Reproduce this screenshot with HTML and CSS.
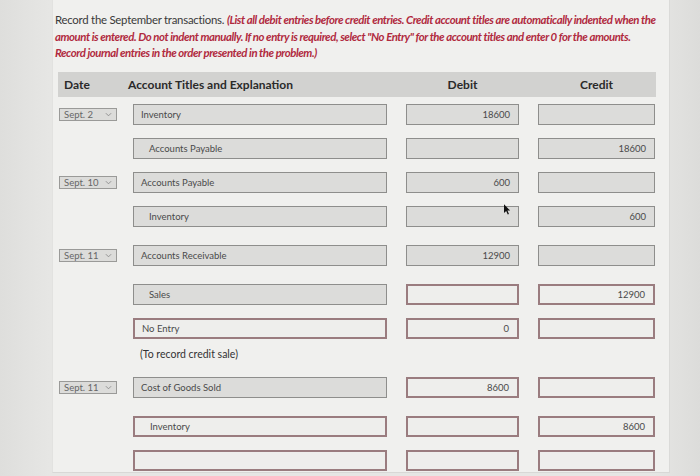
FILE: index.html
```html
<!DOCTYPE html>
<html lang="en">
<head>
  <meta charset="UTF-8" />
  <title>Journal Entries</title>
  <link rel="stylesheet" href="styles.css">
</head>
<body>

  <div class="screen">

    <!-- Instructions -->
    <p class="intro">
      Record the September transactions. <em>(List all debit entries before credit entries. Credit account titles are automatically indented when the<br>amount is entered. Do not indent manually. If no entry is required, select "No Entry" for the account titles and enter 0 for the amounts.<br>Record journal entries in the order presented in the problem.)</em>
    </p>

    <!-- Journal table -->
    <div class="journal">
      <div class="head">
        <div class="date">Date</div>
        <div class="acct">Account Titles and Explanation</div>
        <div class="amt">Debit</div>
        <div class="amt">Credit</div>
      </div>

      <div class="row">
        <div class="date"><div class="select">Sept. 2<svg viewBox="0 0 8 5"><path d="M1 1l3 3 3-3"/></svg></div></div>
        <div class="acct field">Inventory</div>
        <div class="amt field">18600</div>
        <div class="amt field"></div>
      </div>
      <div class="row">
        <div class="date"></div>
        <div class="acct field indent">Accounts Payable</div>
        <div class="amt field"></div>
        <div class="amt field">18600</div>
      </div>

      <div class="row">
        <div class="date"><div class="select">Sept. 10<svg viewBox="0 0 8 5"><path d="M1 1l3 3 3-3"/></svg></div></div>
        <div class="acct field">Accounts Payable</div>
        <div class="amt field">600</div>
        <div class="amt field"></div>
      </div>
      <div class="row">
        <div class="date"></div>
        <div class="acct field indent">Inventory</div>
        <div class="amt field"></div>
        <div class="amt field">600</div>
      </div>

      <div class="row wide">
        <div class="date"><div class="select">Sept. 11<svg viewBox="0 0 8 5"><path d="M1 1l3 3 3-3"/></svg></div></div>
        <div class="acct field">Accounts Receivable</div>
        <div class="amt field">12900</div>
        <div class="amt field"></div>
      </div>
      <div class="row wide">
        <div class="date"></div>
        <div class="acct field indent">Sales</div>
        <div class="amt field flagged"></div>
        <div class="amt field flagged">12900</div>
      </div>
      <div class="row">
        <div class="date"></div>
        <div class="acct field flagged">No Entry</div>
        <div class="amt field flagged">0</div>
        <div class="amt field flagged"></div>
      </div>
      <div class="note">(To record credit sale)</div>

      <div class="row">
        <div class="date"><div class="select">Sept. 11<svg viewBox="0 0 8 5"><path d="M1 1l3 3 3-3"/></svg></div></div>
        <div class="acct field">Cost of Goods Sold</div>
        <div class="amt field flagged">8600</div>
        <div class="amt field flagged"></div>
      </div>
      <div class="row wide">
        <div class="date"></div>
        <div class="acct field flagged indent">Inventory</div>
        <div class="amt field flagged"></div>
        <div class="amt field flagged">8600</div>
      </div>
      <div class="row">
        <div class="date"></div>
        <div class="acct field flagged"></div>
        <div class="amt field flagged"></div>
        <div class="amt field flagged"></div>
      </div>
    </div>

    <!-- Mouse pointer -->
    <svg class="pointer" viewBox="0 0 8 12"><path d="M0 0v10l2.5-2.3 1.8 4 1.4-.6-1.8-3.9H7z"/></svg>
  </div>

</body>
</html>
```

FILE: styles.css
```css
/* Reset */
* {
  margin: 0;
  padding: 0;
  box-sizing: border-box;
}
body {
  font-family: Lato, "Noto Sans", sans-serif;
  background: linear-gradient(90deg, #dededc, #e6e6e4 7%, #e6e6e4 93%, #dcdcda);
  color: #333;
  width: 700px;
  height: 476px;
  overflow: hidden;
}

/* Screen area */
.screen {
  position: relative;
  margin-left: 52px;
  width: 618px;
  height: 473px;
  padding: 12px 0 0 2px;
  background: #f0f0ee;
  border-left: 1px solid #e2e2e0;
  border-right: 1px solid #dadad8;
  border-bottom: 1px solid #d8d8d6;
}

/* Instructions */
.intro {
  font-size: 11.4px;
  line-height: 16.5px;
  letter-spacing: -0.25px;
  color: #3a3a3a;
  white-space: nowrap;
}
.intro em {
  color: #b02a3e;
  font-weight: bold;
  letter-spacing: -0.45px;
}

/* Journal */
.journal {
  margin: 10px 0 0 3px;
  width: 598px;
}
.head, .row {
  display: flex;
  align-items: center;
}
.head {
  height: 25px;
  background: #d2d2d0;
  font-size: 12px;
  font-weight: bold;
  color: #2a2a2a;
}
.head .date {
  padding-left: 6px;
}
.head .acct {
  margin-left: -5px;
  margin-right: 24px;
}
.head .amt {
  text-align: center;
}

.date {
  width: 62px;
  margin-right: 13px;
}
.acct {
  width: 254px;
  margin-right: 19px;
}
.amt {
  width: 113px;
  margin-right: 19px;
}
.amt:last-child {
  width: 117px;
  margin-right: 0;
}

.row {
  height: 21px;
  margin-top: 13px;
}
.head + .row {
  margin-top: 7px;
}
.row.wide {
  margin-top: 18px;
}

/* Inputs */
.field, .select {
  height: 100%;
  background: #dcdcda;
  border: 1.5px solid #8e8e8c;
  font-size: 9.5px;
  color: #4a4a4a;
  display: flex;
  align-items: center;
  padding: 0 7px;
}
.amt.field {
  justify-content: flex-end;
  padding-right: 8px;
}
.field.indent {
  padding-left: 15px;
}
.field.flagged {
  background: #eeeeec;
  border: 2px solid #9a7c7f;
}

.select {
  width: 58px;
  margin-left: 1px;
  padding: 0 4px;
  justify-content: space-between;
  color: #666;
  border-color: #9a9a98;
}
.select svg {
  width: 7px;
  height: 5px;
  fill: none;
  stroke: #8a8a8a;
  stroke-width: 1;
}

.note {
  margin: 9px 0 0 82px;
  height: 16px;
  font-size: 10.5px;
  color: #333;
}
.note + .row {
  margin-top: 13px;
}

/* Pointer overlay */
.pointer {
  position: absolute;
  left: 451px;
  top: 204px;
  width: 7px;
  height: 11px;
  fill: #111;
}
```
